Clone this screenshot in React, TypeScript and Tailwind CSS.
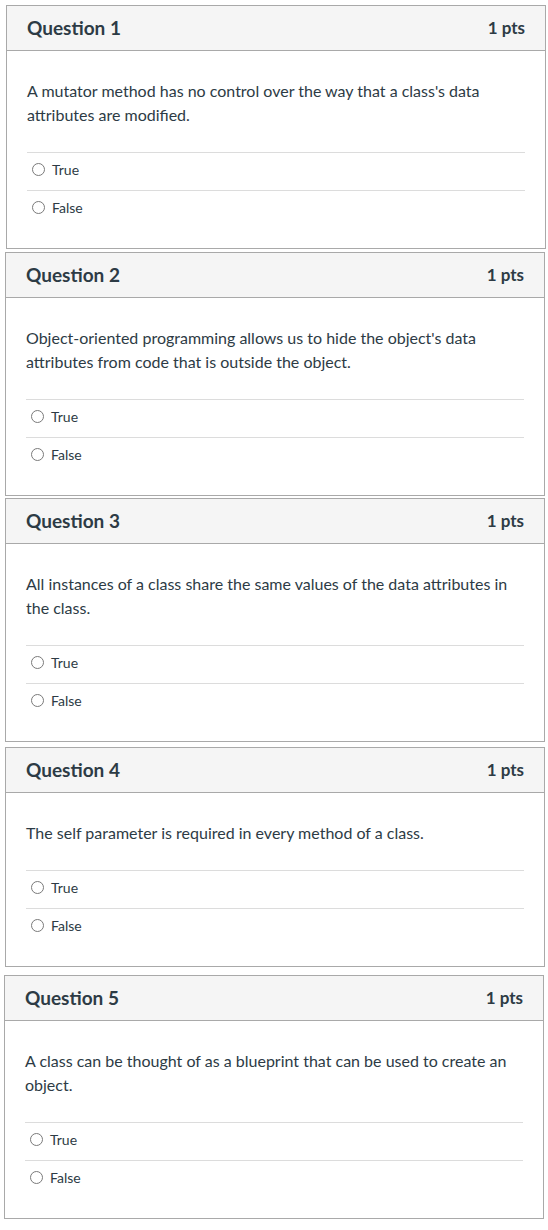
import React from "react";

type Q = { n: number; text: string[]; ml: string; mt: string };

const questions: Q[] = [
  { n: 1, text: ["A mutator method has no control over the way that a class's data", "attributes are modified."], ml: "ml-[6px]", mt: "mt-[5px]" },
  { n: 2, text: ["Object-oriented programming allows us to hide the object's data", "attributes from code that is outside the object."], ml: "ml-[5px]", mt: "mt-[3px]" },
  { n: 3, text: ["All instances of a class share the same values of the data attributes in", "the class."], ml: "ml-[5px]", mt: "mt-[2px]" },
  { n: 4, text: ["The self parameter is required in every method of a class."], ml: "ml-[5px]", mt: "mt-[5px]" },
  { n: 5, text: ["A class can be thought of as a blueprint that can be used to create an", "object."], ml: "ml-[4px]", mt: "mt-[8px]" },
];

function Card({ q }: { q: Q }) {
  return (
    <div className={`${q.ml} ${q.mt} w-[540px] border border-[#a9a9a9] bg-white`}>
      <div className="flex h-[45px] items-center justify-between border-b border-[#a9a9a9] bg-[#f5f5f5] px-[20px]">
        <span className="text-[19px] font-bold text-[#2d3b45]">Question {q.n}</span>
        <span className="text-[17px] font-bold text-[#2d3b45]">1 pts</span>
      </div>
      <div className="px-[20px] pt-[28px] pb-[20px]">
        <div className="text-[16px] leading-[24px] text-[#2d3b45]">
          {q.text.map((t, i) => (
            <div key={i}>{t}</div>
          ))}
        </div>
        <div className="mt-[25px]">
          {["True", "False"].map((a) => (
            <div key={a} className="flex h-[38px] items-center border-t border-[#dcdcdc] pb-[5px] pl-[5px]">
              <span className="h-[13px] w-[13px] rounded-full border border-[#7a7a7a]" />
              <span className="ml-[7px] text-[14px] text-[#2d3b45]">{a}</span>
            </div>
          ))}
        </div>
      </div>
    </div>
  );
}

export default function App() {
  return (
    <div className="w-[548px] min-h-[1230px] bg-white pb-[12px]" style={{ fontFamily: "Lato, 'Liberation Sans', sans-serif" }}>
      {questions.map((q) => (
        <Card key={q.n} q={q} />
      ))}
    </div>
  );
}
